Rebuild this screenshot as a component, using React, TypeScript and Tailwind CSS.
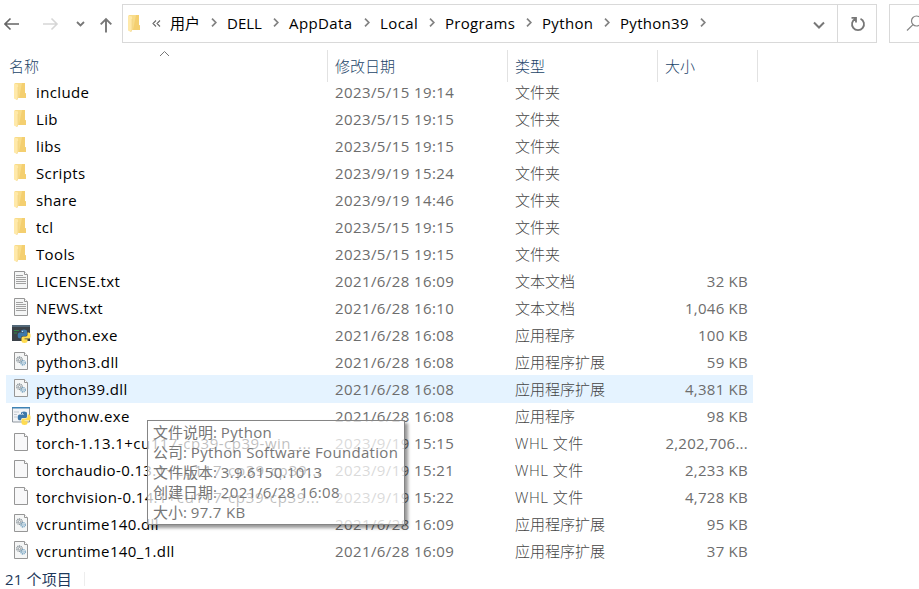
import React from "react";

type Kind = "folder" | "txt" | "exe" | "exew" | "dll" | "file";
type Entry = { kind: Kind; name: string; rest?: string; track?: string; date: string; type: string; size?: string; selected?: boolean };

const entries: Entry[] = [
  { kind: "folder", name: "include", date: "2023/5/15 19:14", type: "文件夹" },
  { kind: "folder", name: "Lib", date: "2023/5/15 19:15", type: "文件夹" },
  { kind: "folder", name: "libs", date: "2023/5/15 19:15", type: "文件夹" },
  { kind: "folder", name: "Scripts", date: "2023/9/19 15:24", type: "文件夹" },
  { kind: "folder", name: "share", date: "2023/9/19 14:46", type: "文件夹" },
  { kind: "folder", name: "tcl", date: "2023/5/15 19:15", type: "文件夹" },
  { kind: "folder", name: "Tools", date: "2023/5/15 19:15", type: "文件夹" },
  { kind: "txt", name: "LICENSE.txt", date: "2021/6/28 16:09", type: "文本文档", size: "32 KB" },
  { kind: "txt", name: "NEWS.txt", date: "2021/6/28 16:10", type: "文本文档", size: "1,046 KB" },
  { kind: "exe", name: "python.exe", date: "2021/6/28 16:08", type: "应用程序", size: "100 KB" },
  { kind: "dll", name: "python3.dll", date: "2021/6/28 16:08", type: "应用程序扩展", size: "59 KB" },
  { kind: "dll", name: "python39.dll", date: "2021/6/28 16:08", type: "应用程序扩展", size: "4,381 KB", selected: true },
  { kind: "exew", name: "pythonw.exe", date: "2021/6/28 16:08", type: "应用程序", size: "98 KB" },
  { kind: "file", name: "torch-1.13.1", rest: "+cu117-cp39-cp39-win_...", track: "tracking-[0.5px]", date: "2023/9/19 15:15", type: "WHL 文件", size: "2,202,706..." },
  { kind: "file", name: "torchaudio-0.13", rest: ".1+cu117-cp39-cp39...", track: "tracking-[0.85px]", date: "2023/9/19 15:21", type: "WHL 文件", size: "2,233 KB" },
  { kind: "file", name: "torchvision-0.14", rest: ".1+cu117-cp39-cp39...", track: "tracking-[0.7px]", date: "2023/9/19 15:22", type: "WHL 文件", size: "4,728 KB" },
  { kind: "dll", name: "vcruntime140.dll", date: "2021/6/28 16:09", type: "应用程序扩展", size: "95 KB" },
  { kind: "dll", name: "vcruntime140_1.dll", date: "2021/6/28 16:09", type: "应用程序扩展", size: "37 KB" },
];

function FolderIcon() {
  return (
    <svg width="12" height="17" viewBox="0 0 12 17">
      <path d="M1 0h10v10l1 .5V15H1z" fill="#f8dc8a" />
      <path d="M8 0h3v10l1 .5V15H5z" fill="#f4cf70" />
      <path d="M0 0.300 4 1.500v13L2.900 17 0 15.600z" fill="#ffe9a9" />
      <path d="M2.900 17 4 14.300V4" fill="none" stroke="#efd080" strokeWidth=".6" />
    </svg>
  );
}

function Snakes() {
  return (
    <g>
      <path d="M9 6.300q0-1.800 3-1.800t3 1.800v3.200q0 1.500-1.500 1.500h-3Q9 11 9 13.300H8q-2.300 0-2.300-2.900T8 7.600h4v-.5H9z" fill="#3d78aa" />
      <path d="M15.500 7.600h.9q2.200 0 2.200 3.100t-2.200 2.900h-3.900v.6H15.500V16q0 1.900-3 1.900t-3-1.900v-3q0-1.500 1.500-1.500h2.900q1.600 0 1.600-1.800z" fill="#ffdc50" />
      <circle cx="10.500" cy="6.200" r=".55" fill="#fff" />
    </g>
  );
}

function PythonIcon({ windowed }: { windowed?: boolean }) {
  return (
    <svg width="19" height="19" viewBox="0 0 19 19">
      {windowed ? (
        <>
          <path d="M.5.5h17v14.500H.5z" fill="#f2f4f7" stroke="#8f979e" />
          <path d="M0 0h18v1.500H0z" fill="#3e83b5" />
          <path d="M2 5h5M2 7.500h3M2 10h3" stroke="#c3c9d0" />
        </>
      ) : (
        <>
          <path d="M0 0h18v16H0z" fill="#3b4248" />
          <path d="M0 0h18v2H0z" fill="#536979" />
          <path d="M2 5.500h5M2 8h3" stroke="#348747" />
        </>
      )}
      <Snakes />
    </svg>
  );
}

function Page({ kind }: { kind: Kind }) {
  return (
    <svg width="15" height="18" viewBox="0 0 15 18">
      <path d="M.5.5h9.800l3.200 3.200v13.800H.5z" fill={kind === "file" ? "#f8f8f9" : "#f5f6f6"} stroke="#969696" />
      <path d="M10.500.5v3h3" fill="#fff" stroke="#969696" />
      {kind === "txt" && <path d="M2 4.500h7M2 6.500h10M2 8.500h10M2 10.500h10M2 12.500h10" stroke="#a2a2a2" strokeWidth="1" />}
      {kind === "dll" && (
        <g fill="none">
          <circle cx="5.500" cy="7.700" r="2.700" stroke="#7e8990" strokeWidth="1.300" strokeDasharray="1.100 .6" />
          <circle cx="5.500" cy="7.700" r="1.200" stroke="#7e8990" strokeWidth=".8" />
          <circle cx="9.100" cy="10.800" r="2.200" stroke="#6d9dbe" strokeWidth="1.300" strokeDasharray="1.100 .5" />
          <circle cx="9.100" cy="10.800" r=".8" stroke="#8fb4cc" strokeWidth=".7" />
        </g>
      )}
    </svg>
  );
}

function Icon({ kind }: { kind: Kind }) {
  if (kind === "folder") return <FolderIcon />;
  if (kind === "exe") return <PythonIcon />;
  if (kind === "exew") return <PythonIcon windowed />;
  return <Page kind={kind} />;
}

const iconPlace: Record<Kind, string> = {
  folder: "pl-2 pt-[5px]",
  txt: "pl-2 pt-1",
  dll: "pl-2 pt-1",
  file: "pl-2 pt-1",
  exe: "pl-[6px] pt-1",
  exew: "pl-[6px] pt-[5px]",
};

function Chevron() {
  return (
    <svg width="6" height="9" viewBox="0 0 6 9" className="mb-px shrink-0">
      <path d="M1 .7 4.800 4.500 1 8.300" fill="none" stroke="#828282" strokeWidth="1.700" />
    </svg>
  );
}

const crumbs = [
  { label: "用户", box: "w-[57px]", track: "" },
  { label: "DELL", box: "w-[62px]", track: "" },
  { label: "AppData", box: "w-[91px]", track: "tracking-[0.4px]" },
  { label: "Local", box: "w-[65px]", track: "tracking-[0.4px]" },
  { label: "Programs", box: "w-[97px]", track: "tracking-[0.3px]" },
  { label: "Python", box: "w-[78px]", track: "tracking-[0.35px]" },
  { label: "Python39", box: "w-[96px]", track: "tracking-[0.3px]" },
];

function AddressBar() {
  return (
    <div className="flex h-[50px] shrink-0 items-start pt-1">
      <div className="flex h-[39px] w-[122px] shrink-0 items-center pl-1">
        <svg width="116" height="39" viewBox="4 4 116 39" fill="none" stroke="#666" strokeWidth="1.600">
          <path d="M5 24h14M10.500 18.500 5 24l5.500 5.500" />
          <path d="M43 24h14M51.500 18.500 57 24l-5.500 5.500" stroke="#d6d6d6" />
          <path d="m77 22 3.500 3.500L84 22" stroke="#777" strokeWidth="1.800" />
          <path d="M106 32.500V19M100.700 24.300 106 19l5.300 5.300" strokeWidth="1.900" stroke="#777" />
        </svg>
      </div>
      <div className="flex h-[39px] w-[755px] shrink-0 border border-[#d9d9d9]">
        <div className="flex w-[714px] items-center pb-px pl-[5px]">
          <FolderIcon />
          <svg width="9" height="7" viewBox="0 0 9 7" className="ml-[12px] mr-[9px]">
            <path d="M4 .5 1 3.500l3 3M8 .5 5 3.500l3 3" fill="none" stroke="#666" strokeWidth="1.100" />
          </svg>
          {crumbs.map((c) => (
            <div key={c.label} className={`flex shrink-0 items-center justify-between text-black ${c.box}`}>
              <span className={`whitespace-nowrap pb-px ${c.track}`}>{c.label}</span>
              <span className="mr-[10px] flex"><Chevron /></span>
            </div>
          ))}
          <svg width="12" height="8" viewBox="0 0 12 8" className="ml-auto mr-[12px] mt-[3px]">
            <path d="m1 1.500 5 5 5-5" fill="none" stroke="#777" strokeWidth="2" />
          </svg>
        </div>
        <div className="flex flex-1 items-center justify-center border-l border-[#d9d9d9]">
          <svg width="16" height="16" viewBox="0 0 16 16" className="ml-px" fill="none" stroke="#777" strokeWidth="1.800">
            <path d="M10.500 2.700A6 6 0 1 1 5.500 2.700M1.500 1.900h4.500v4.500" />
          </svg>
        </div>
      </div>
      <div className="ml-3 flex h-[39px] flex-1 items-center border border-r-0 border-[#d9d9d9] pl-[16px]">
        <svg width="13" height="17" viewBox="0 0 13 17" fill="none" stroke="#858585" strokeWidth="1.200">
          <circle cx="10.500" cy="6" r="5" /><path d="M7 9.600 1 15.500" />
        </svg>
      </div>
    </div>
  );
}

function Header() {
  const cell = "h-8 shrink-0 border-r border-[#e2e2e2] pt-[5px]";
  return (
    <div className="flex h-7 shrink-0 font-light text-[#234468]">
      <div className={`${cell} relative w-[328px] pl-[9px]`}>
        名称
        <svg width="11" height="6" viewBox="0 0 11 6" className="absolute left-[159px] top-[1px]">
          <path d="m1 5 4.500-4.500L10 5" fill="none" stroke="#777" />
        </svg>
      </div>
      <div className={`${cell} w-[180px] pl-[7px]`}>修改日期</div>
      <div className={`${cell} w-[150px] pl-[7px]`}>类型</div>
      <div className={`${cell} w-[100px] pl-[7px]`}>大小</div>
    </div>
  );
}

function Row({ e }: { e: Entry }) {
  return (
    <div className={`ml-[6px] flex h-[27px] w-[747px] shrink-0 items-center text-[#6d6d6d] ${e.selected ? "bg-[#e5f3ff] shadow-[0_1px_0_#e5f3ff]" : ""}`}>
      <div className={`flex w-[30px] shrink-0 items-start self-start ${iconPlace[e.kind]}`}><Icon kind={e.kind} /></div>
      <div className="w-[299px] shrink-0 whitespace-nowrap pt-px tracking-[0.36px] text-black">
        {e.name}
        {e.rest && <span className={e.track}>{e.rest}</span>}
      </div>
      <div className="w-[180px] shrink-0 pt-px tracking-[0.4px]">{e.date}</div>
      <div className={`w-[130px] shrink-0 pt-px font-light text-[#444] ${e.kind === "file" ? "tracking-[0.5px]" : ""}`}>{e.type}</div>
      <div className="w-[103px] shrink-0 pt-px text-right tracking-[0.25px]">{e.size}</div>
    </div>
  );
}

function Tooltip() {
  return (
    <div className="absolute left-[147px] top-[420px] h-[105px] w-[258px] whitespace-nowrap border border-[#858585] bg-white/75 pl-[5px] pt-px leading-5 text-[#777] shadow-[3px_3px_3px_rgba(0,0,0,0.4)]">
      <div>文件说明: <span className="tracking-[0.3px]">Python</span></div>
      <div>公司: <span className="tracking-[0.31px]">Python Software Foundation</span></div>
      <div>文件版本: <span className="tracking-[0.3px]">3.9.6150.1013</span></div>
      <div>创建日期: <span className="tracking-[0.4px]">2021/6/28 16:08</span></div>
      <div>大小: <span className="tracking-[0.3px]">97.7 KB</span></div>
    </div>
  );
}

export default function App() {
  return (
    <div className="relative flex h-[589px] w-[919px] flex-col overflow-hidden bg-white font-['Open_Sans','Noto_Sans_CJK_SC',sans-serif] text-[15px] leading-[22px]">
      <AddressBar />
      <Header />
      {entries.map((e) => <Row key={e.name} e={e} />)}
      <div className="flex flex-1 items-center pl-[5px] pt-[4px] text-[#1e395b]">
        <span className="w-[79px] tracking-[0.15px]">21 个项目</span>
        <span className="h-[14px] w-px bg-[#ededed]" />
      </div>
      <Tooltip />
    </div>
  );
}
